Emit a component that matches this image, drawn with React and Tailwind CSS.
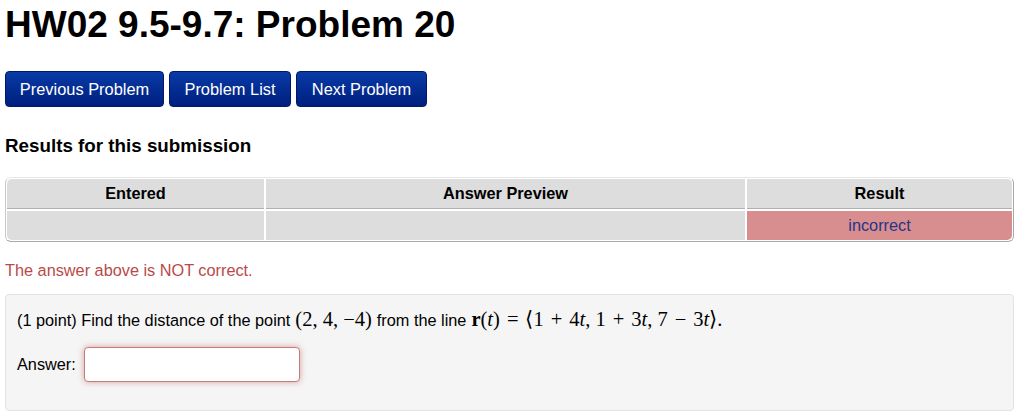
import React from 'react';

const sans = { fontFamily: '"Liberation Sans", Arial, sans-serif' };
const serif = 'font-["Liberation_Serif","Times_New_Roman",serif]';

function NavButton({ children, width }) {
    return (
        <button
            className={`h-[36px] ${width} rounded-[4px] border border-[#001a66] bg-gradient-to-b from-[#0a3aa6] to-[#001f7f] text-[16.4px] text-white`}
        >
            {children}
        </button>
    );
}

function Math({ children }) {
    return <span className={`${serif} text-[20.5px]`}>{children}</span>;
}

// binary operator / relation with math-like spacing
function Op({ children }) {
    return <span className="mx-[7px]">{children}</span>;
}

export default function App() {
    return (
        <div className="w-[1024px] h-[420px] overflow-hidden bg-white text-black" style={sans}>
            <div className="px-[5px] pt-[3px]">
                <h1 className="text-[37px] font-bold leading-[44px]">HW02 9.5-9.7: Problem 20</h1>

                <div className="mt-[24px] flex gap-[5px]">
                    <NavButton width="w-[159px]">Previous Problem</NavButton>
                    <NavButton width="w-[122px]">Problem List</NavButton>
                    <NavButton width="w-[131px]">Next Problem</NavButton>
                </div>

                <h2 className="mt-[28px] text-[18.8px] font-bold leading-[22px]">Results for this submission</h2>

                {/* results table */}
                <div className="mt-[20px] w-[1009px] rounded-[6px] border border-[#a9a9a9] border-t-[#e6e6e6] border-l-[#c8c8c8] p-[1px]">
                    <div className="grid grid-cols-[257px_479px_1fr] gap-[2px] bg-white">
                        <div className="h-[30px] bg-[#dddddd] flex items-center justify-center text-[16.3px] font-bold border-b border-[#b0b0b0] rounded-tl-[5px]">Entered</div>
                        <div className="h-[30px] bg-[#dddddd] flex items-center justify-center text-[16.3px] font-bold border-b border-[#b0b0b0]">Answer Preview</div>
                        <div className="h-[30px] bg-[#dddddd] flex items-center justify-center text-[16.3px] font-bold border-b border-[#b0b0b0] rounded-tr-[5px]">Result</div>
                        <div className="h-[29px] bg-[#dddddd] rounded-bl-[5px]" />
                        <div className="h-[29px] bg-[#dddddd]" />
                        <div className="h-[29px] bg-[#d88e8e] flex items-center justify-center text-[16.3px] text-[#26348a] rounded-br-[5px]">incorrect</div>
                    </div>
                </div>

                <p className="mt-[18px] text-[16.3px] text-[#b94a48] leading-[20px]">The answer above is NOT correct.</p>

                <div className="mt-[14px] w-[1009px] h-[117px] rounded-[4px] border border-[#e3e3e3] bg-[#f5f5f5] px-[11px] pt-[12px]">
                    <p className="text-[16.3px] leading-[24px] flex items-baseline gap-[5px]">
                        <span>(1 point) Find the distance of the point</span>
                        <Math>(2, 4, −4)</Math>
                        <span>from the line</span>
                        <Math>
                            <b>r</b>(<i>t</i>)<Op>=</Op>⟨1<Op>+</Op>4<i>t</i>, 1<Op>+</Op>3<i>t</i>, 7<Op>−</Op>3<i>t</i>⟩.
                        </Math>
                    </p>
                    <div className="mt-[15px] flex items-center gap-[8px]">
                        <span className="text-[16.3px]">Answer:</span>
                        <input
                            type="text"
                            className="h-[35px] w-[216px] rounded-[4px] border border-[#c77b7a] bg-white shadow-[0_0_6px_rgba(185,74,72,0.5)] outline-none"
                        />
                    </div>
                </div>
            </div>
        </div>
    );
}
